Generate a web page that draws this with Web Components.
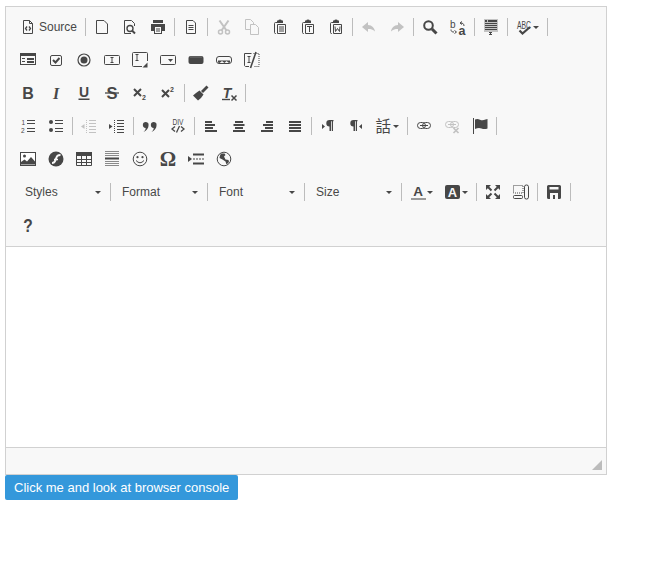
<!DOCTYPE html>
<html lang="en"><head><meta charset="utf-8"><title>Editor</title>
<style>
html,body{margin:0;padding:0;background:#fff}
body{padding:6px 0 0 5px;font-family:"Liberation Sans",Arial,sans-serif;color:#484848}
</style></head><body>
<ck-editor>
  <ck-row>
    <ck-btn icon="source">Source</ck-btn><ck-sep></ck-sep>
    <ck-btn icon="newpage"></ck-btn><ck-btn icon="preview"></ck-btn><ck-btn icon="print"></ck-btn><ck-sep></ck-sep>
    <ck-btn icon="templates"></ck-btn><ck-sep></ck-sep>
    <ck-btn icon="cut" disabled></ck-btn><ck-btn icon="copy" disabled></ck-btn><ck-btn icon="paste"></ck-btn><ck-btn icon="pastetext"></ck-btn><ck-btn icon="pasteword"></ck-btn><ck-sep></ck-sep>
    <ck-btn icon="undo" disabled></ck-btn><ck-btn icon="redo" disabled></ck-btn><ck-sep></ck-sep>
    <ck-btn icon="find"></ck-btn><ck-btn icon="replace"></ck-btn><ck-sep></ck-sep>
    <ck-btn icon="selectall"></ck-btn><ck-sep></ck-sep>
    <ck-btn icon="spell" arrow></ck-btn><ck-sep></ck-sep>
  </ck-row>
  <ck-row>
    <ck-btn icon="form"></ck-btn><ck-btn icon="checkbox"></ck-btn><ck-btn icon="radio"></ck-btn><ck-btn icon="textfield"></ck-btn><ck-btn icon="textarea"></ck-btn><ck-btn icon="select"></ck-btn><ck-btn icon="button"></ck-btn><ck-btn icon="imagebutton"></ck-btn><ck-btn icon="hidden"></ck-btn>
  </ck-row>
  <ck-row>
    <ck-btn icon="bold"></ck-btn><ck-btn icon="italic"></ck-btn><ck-btn icon="underline"></ck-btn><ck-btn icon="strike"></ck-btn><ck-btn icon="sub"></ck-btn><ck-btn icon="sup"></ck-btn><ck-sep></ck-sep>
    <ck-btn icon="brush"></ck-btn><ck-btn icon="removeformat"></ck-btn><ck-sep></ck-sep>
  </ck-row>
  <ck-row>
    <ck-btn icon="ol"></ck-btn><ck-btn icon="ul"></ck-btn><ck-sep></ck-sep>
    <ck-btn icon="outdent" disabled></ck-btn><ck-btn icon="indent"></ck-btn><ck-sep></ck-sep>
    <ck-btn icon="quote"></ck-btn><ck-btn icon="div"></ck-btn><ck-sep></ck-sep>
    <ck-btn icon="left"></ck-btn><ck-btn icon="center"></ck-btn><ck-btn icon="right"></ck-btn><ck-btn icon="justify"></ck-btn><ck-sep></ck-sep>
    <ck-btn icon="ltr"></ck-btn><ck-btn icon="rtl"></ck-btn><ck-btn icon="lang" arrow></ck-btn><ck-sep></ck-sep>
    <ck-btn icon="link"></ck-btn><ck-btn icon="unlink" disabled></ck-btn><ck-btn icon="flag"></ck-btn><ck-sep></ck-sep>
  </ck-row>
  <ck-row>
    <ck-btn icon="image"></ck-btn><ck-btn icon="flash"></ck-btn><ck-btn icon="table"></ck-btn><ck-btn icon="hr"></ck-btn><ck-btn icon="smiley"></ck-btn><ck-btn icon="omega"></ck-btn><ck-btn icon="pagebreak"></ck-btn><ck-btn icon="iframe"></ck-btn>
  </ck-row>
  <ck-row>
    <ck-combo first>Styles</ck-combo><ck-sep></ck-sep>
    <ck-combo>Format</ck-combo><ck-sep></ck-sep>
    <ck-combo>Font</ck-combo><ck-sep></ck-sep>
    <ck-combo>Size</ck-combo><ck-sep></ck-sep>
    <ck-btn icon="textcolor" arrow></ck-btn><ck-btn icon="bgcolor" arrow></ck-btn><ck-sep></ck-sep>
    <ck-btn icon="maximize"></ck-btn><ck-btn icon="showblocks"></ck-btn><ck-sep></ck-sep>
    <ck-btn icon="save"></ck-btn><ck-sep></ck-sep>
  </ck-row>
  <ck-row>
    <ck-btn icon="about"></ck-btn>
  </ck-row>
</ck-editor>
<ck-action>Click me and look at browser console</ck-action>
<script>
const F='font-family="Liberation Sans,Arial,sans-serif"';
const D='fill="currentColor" stroke="none"';
const clip=`<path d="M5 3.500H3.500q-1 0-1 1v9q0 1 1 1H4"/><path ${D} d="M5 1.500h1.200Q6.500 .5 8 .5t1.800 1H11V4H5z"/><path d="M5.500 5.500h8v9h-8z"/>`;
const ICONS={
source:`<path d="M3.500 1.500h6l3 3v10h-9z"/><path d="M9.500 1.500v3h3"/><path stroke-width="1.300" d="M7 7.500 5.500 9.500 7 11.500M9 7.500l1.500 2-1.500 2"/>`,
newpage:`<path d="M2.500 1.500h7.500l3.500 3.500v9.500h-11z"/>`,
preview:`<path d="M9 14.500H2.500v-13h7l3 3V7"/><circle cx="8" cy="9.500" r="3" stroke-width="1.400"/><path stroke-width="2" d="m10 11.500 3 3"/>`,
print:`<path ${D} d="M3 1h10v3H3zM1 5h14v7h-3v3H4v-3H1z"/><path fill="#f8f8f8" stroke="none" d="M5 8h6v6H5z"/><path stroke-width="1" d="M6 10h4M6 12h4"/><path fill="none" d="M4.500 7.500h7v7h-7z"/>`,
templates:`<path d="M3.500 1.500h6.500l2.500 2.500v10.500h-9z"/><path d="M5.500 6.500h5M5.500 8.500h5M5.500 10.500h5"/>`,
cut:`<circle cx="4.500" cy="13" r="2" stroke-width="1.500"/><circle cx="11.500" cy="13" r="2" stroke-width="1.500"/><path stroke-width="2" d="M3.500 1.500 10.500 11.500M12.500 1.500 5.500 11.500"/>`,
copy:`<path d="M1.500 .5h5l3 3v7h-8z"/><path fill="#f8f8f8" d="M6.500 5.500h5l3 3v7h-8z"/>`,
paste:clip+`<path d="M7 8h5M7 10h5M7 12h5"/>`,
pastetext:clip+`<path d="M7 7.500h5M9.500 7.500v5.500"/>`,
pasteword:clip+`<path d="M7 7.500 7.500 12.500 9.500 9.500 11.500 12.500 12 7.500"/>`,
undo:`<path ${D} d="M7 3 1 8l6 5v-3c3 0 5 .5 7 2.500-.5-3.500-3-6.500-7-6.500z"/>`,
redo:`<path ${D} d="M9 3l6 5-6 5v-3c-3 0-5 .5-7 2.500.5-3.500 3-6.500 7-6.500z"/>`,
find:`<circle cx="6.500" cy="6.500" r="4.300" stroke-width="2"/><path stroke-width="3" d="m10 10 4.500 4.500"/>`,
replace:`<text x="0" y="8.500" font-size="10" ${F} ${D}>b</text><text x="8.500" y="15.500" font-size="12.500" font-weight="700" ${F} ${D}>a</text><path d="M14 7c0-2-1-3-3.500-3M12 2.500 10 4l2 1.500M1 10.500c0 2 1 2.500 3 2.500M4.500 11.500l2 1.500-2 1.500"/>`,
selectall:`<path fill="#c4c4c4" stroke="none" d="M1 0h14v13H1z"/><path ${D} d="M2 1h2v2H2zM5 1h9v2H5zM2 4h12v1H2zM2 6h12v1H2zM2 8h12v1H2zM2 10h12v1H2z"/><path stroke-width="1" d="M6 13.500h3M7.500 13.500v2M6 15.500h3"/>`,
spell:`<text x="1" y="10" font-size="11.500" textLength="14" lengthAdjust="spacingAndGlyphs" ${F} ${D}>ABC</text><path stroke-width="2.200" d="m3.500 11.500 3 3 7.500-6.500"/>`,
form:`<path ${D} d="M0 1h16v12H0z"/><path fill="#f8f8f8" stroke="none" d="M1 4h14v8H1z"/><path ${D} d="M2 6h3v1H2zM2 9h3v1H2zM7 6h7v2H7zM7 9h7v2H7z"/>`,
checkbox:`<rect x="2.500" y="3.500" width="11" height="10" rx="1.500"/><path stroke-width="2" d="m5 8 2.500 2.500L11.500 6"/>`,
radio:`<circle cx="8" cy="8" r="6" stroke-width="1.200"/><circle cx="8" cy="8" r="3.500" ${D}/>`,
textfield:`<rect x=".5" y="3.500" width="15" height="9" rx="1"/><path d="M6.500 5.500h3M8 5.500v5M6.500 10.500h3"/>`,
textarea:`<path d="M10 14.500H1.500q-1 0-1-1v-12q0-1 1-1h13q1 0 1 1V9"/><path d="M3.500 2.500h3M5 2.500v6M3.500 8.500h3"/><path ${D} d="M15.500 10.500v5h-5z"/>`,
select:`<rect x=".5" y="3.500" width="15" height="9" rx="1"/><path ${D} d="M8 7h5l-2.500 3z"/>`,
button:`<rect x=".5" y="4" width="15" height="8" rx="2" ${D}/><path stroke="#777" d="M2 5h12"/>`,
imagebutton:`<rect x=".5" y="4.500" width="15" height="7" rx="2.500" stroke-width="1"/><path ${D} d="M2 10.500V8.500h12v2l-1 .5-2.500-2L8.500 11 6 9l-2.500 2z"/>`,
hidden:`<path d="M5 14.500H1.500q-1-.5-1-1V1.500h7"/><path stroke-dasharray="1 1" d="M9.500 1.500h5.500v13h-5"/><path d="M3.500 4.500h3M5 4.500v6M3.500 10.500h3"/><path stroke-width="1.600" d="M6.500 16 12 0"/>`,
bold:`<text x="8" y="14" text-anchor="middle" font-size="16" font-weight="700" ${F} ${D}>B</text>`,
italic:`<text x="8" y="13.500" text-anchor="middle" font-size="16" font-style="italic" font-weight="700" font-family="Liberation Serif,serif" fill="currentColor" stroke="none">I</text>`,
underline:`<text x="8" y="11.500" text-anchor="middle" font-size="14" font-weight="700" ${F} ${D}>U</text><path stroke-width="1.500" d="M2.500 14.250h11"/>`,
strike:`<text x="8" y="14" text-anchor="middle" font-size="16.500" font-weight="700" ${F} ${D}>S</text><path stroke-width="1.300" d="M1 8h14"/>`,
sub:`<path stroke-width="2" d="m2 4 7 7M9 4l-7 7"/><text x="10" y="14.500" font-size="7" font-weight="700" ${F} ${D}>2</text>`,
sup:`<path stroke-width="2" d="m2 5 7 7M9 5l-7 7"/><text x="10" y="6.500" font-size="7" font-weight="700" ${F} ${D}>2</text>`,
brush:`<path ${D} d="M13.500 .5l2 2-5.500 5.500-2-2z"/><path ${D} d="M6.500 5.500 10.500 9.500 8 13 5 15.500 0 10.500 3 8z"/>`,
removeformat:`<text x="6" y="12.500" text-anchor="middle" font-size="14" font-style="italic" font-weight="700" ${F} ${D}>T</text><path stroke-width="1.400" d="M1 14.500h8"/><path stroke-width="1.500" d="m10.500 10.500 5 5M15.500 10.500l-5 5"/>`,
ol:`<text x="1.500" y="7" font-size="6.500" ${F} ${D}>1</text><text x="1" y="15" font-size="6.500" ${F} ${D}>2</text><path stroke-width="1.100" d="M7 2.500h8M7 5.500h8M7 10.500h8M7 13.500h8"/>`,
ul:`<circle cx="3" cy="4" r="2" ${D}/><circle cx="3" cy="12" r="2" ${D}/><path stroke-width="1.100" d="M7 2.500h8M7 5.500h8M7 10.500h8M7 13.500h8"/>`,
outdent:`<path d="M8 2.500h7M8 5.500h7M8 8.500h7M8 11.500h7M8 14.500h7"/><path stroke-dasharray="1 1" d="M5.500 2v13"/><path ${D} d="M0 8.500 3.500 6v5z"/>`,
indent:`<path d="M8 2.500h7M8 5.500h7M8 8.500h7M8 11.500h7M8 14.500h7"/><path stroke-dasharray="1 1" d="M5.500 2v13"/><path ${D} d="M3.500 8.500 0 6v5z"/>`,
quote:`<path ${D} d="M4 4a3 3 0 0 1 2.500 3.500C6.500 10.500 4 13 1.500 14c1.500-1.300 2.200-2.700 2.200-4A3 3 0 0 1 4 4zM12 4a3 3 0 0 1 2.500 3.500C14.500 10.500 12 13 9.500 14c1.500-1.300 2.200-2.700 2.200-4A3 3 0 0 1 12 4z"/>`,
div:`<text x="8" y="6.500" text-anchor="middle" font-size="8.500" textLength="11" lengthAdjust="spacingAndGlyphs" ${F} ${D}>DIV</text><path stroke-width="1.300" d="M5 8.500 2 11l3 2.500M11 8.500l3 2.500-3 2.500M9.500 8l-3 6.500"/>`,
left:`<path stroke-width="2" d="M2 4h7M2 7h10M2 10h8M2 13h12"/>`,
center:`<path stroke-width="2" d="M4 4h8M2.500 7h11M4 10h8M2 13h12"/>`,
right:`<path stroke-width="2" d="M7 4h7M4 7h10M6 10h8M2 13h12"/>`,
justify:`<path stroke-width="2" d="M2 4h12M2 7h12M2 10h12M2 13h12"/>`,
ltr:`<path ${D} d="M2 6 5 8.500 2 11zM13.500 2H9.500a3.200 3.200 0 0 0 0 6.400V13H11V3.200h.8V13h1.200V3.200h.5z"/>`,
rtl:`<path ${D} d="M14 6 11 8.500 14 11zM9.500 2H5.500a3.200 3.200 0 0 0 0 6.400V13H7V3.200h.8V13H9V3.200h.5z"/>`,
lang:`<text x="-.5" y="14" font-size="15.500" font-family="Noto Sans CJK TC,sans-serif" fill="currentColor" stroke="none">話</text>`,
link:`<rect x="1.500" y="4.500" width="8" height="6" rx="3"/><rect x="6.500" y="4.500" width="8" height="6" rx="3"/><path d="M4 7.500h8"/>`,
unlink:`<rect x="1.500" y="3.500" width="8" height="6" rx="3"/><rect x="6.500" y="3.500" width="8" height="6" rx="3"/><path d="M4 6.500h8"/><path stroke-width="1.700" d="m9.500 10 5 5M14.500 10l-5 5"/>`,
flag:`<path stroke-width="1" d="M1.500 0v16"/><path ${D} d="M3 1.500q2.500-1 5 .2t5.500-.2l2-.5v9.500q-3 1-6 0t-6.500.5z"/>`,
image:`<rect x=".5" y="1.500" width="15" height="13" fill="#fff"/><circle cx="4.500" cy="5" r="1.500" ${D}/><path ${D} d="M1 13.500V11l3.500-2.500 2.500 2L11 6l4 4.500v3z"/>`,
flash:`<circle cx="8" cy="8" r="7.500" ${D}/><path stroke="#f8f8f8" stroke-width="2" d="M4 12c3 0 3-2 4-4.500S9.500 4 12.500 4"/><path stroke="#f8f8f8" stroke-width="1.500" d="M6 8.500h4"/>`,
table:`<path ${D} d="M0 1h16v3.500H0z"/><path d="M.5 1.500h15v13H.5zM.5 8.500h15M.5 11.500h15M5.500 4v11M10.500 4v11M.5 4.500h15"/>`,
hr:`<path stroke="#8a8a8a" d="M1 .5h14M1 2.500h14M1 4.500h14M1 10.500h14M1 12.500h14M1 14.500h14"/><path stroke-width="2" d="M1 7.500h14"/>`,
smiley:`<circle cx="8" cy="8" r="6.800"/><circle cx="5.500" cy="6.200" r="1.100" ${D}/><circle cx="10.500" cy="6.200" r="1.100" ${D}/><path d="M4 9.500q4 4.500 8 0"/>`,
omega:`<text x="8" y="15" text-anchor="middle" font-size="20.500" font-weight="700" font-family="Liberation Serif,serif" fill="currentColor" stroke="none">Ω</text>`,
pagebreak:`<path ${D} d="M0 5 4 8 0 11z"/><path stroke-width="2" d="M5 3.500h11M5 12.500h11"/><path stroke-dasharray="2 1" d="M5 8h11"/>`,
iframe:`<circle cx="8" cy="8" r="6.800"/><path ${D} d="M5 2.500 8.500 2.500 9.500 4 8 5.500 9.500 8.500 12.500 9 13 11 10.500 13.500 9.500 10.500 6.500 8.500 3.500 7 4 4.500z"/>`,
textcolor:`<text x="8" y="11.500" text-anchor="middle" font-size="13.500" font-weight="700" ${F} ${D}>A</text><path stroke="#9a9a9a" stroke-width="2" d="M1 15h15"/>`,
bgcolor:`<rect x="0" y="1" width="15" height="14" rx="2" ${D}/><text x="7.500" y="13" text-anchor="middle" font-size="13" font-weight="700" ${F} fill="#f8f8f8" stroke="none">A</text>`,
maximize:`<path ${D} d="M1 1h5L1 6zM15 1v5l-5-5zM1 15v-5l5 5zM15 15h-5l5-5z"/><path stroke-width="2" d="M3 3l3.500 3.500M13 3 9.500 6.500M3 13l3.500-3.500M13 13 9.500 9.500"/>`,
showblocks:`<path stroke-dasharray="1 1" d="M.5 1.500h9.500v7.500h-9.500z"/><rect x=".5" y="11.500" width="9" height="3" rx="1"/><rect x="11.500" y="1" width="4" height="14" rx="1.800" stroke-width="1"/>`,
save:`<path ${D} d="M2.500 1h11A1.500 1.500 0 0 1 15 2.500v11a1.500 1.500 0 0 1-1.500 1.500h-11A1.500 1.500 0 0 1 1 13.500v-11A1.500 1.500 0 0 1 2.500 1z"/><path fill="#f8f8f8" stroke="none" d="M3.500 3h9v2.500h-9zM4 9h8v6H4z"/><path ${D} d="M7 11h2v4H7z"/>`,
about:`<text x="8" y="14.500" text-anchor="middle" font-size="18" font-weight="700" textLength="9.500" lengthAdjust="spacingAndGlyphs" ${F} ${D}>?</text>`
};
function el(html){const t=document.createElement('template');t.innerHTML=html;return t.content}
class Base extends HTMLElement{
  render(html){this.attachShadow({mode:'open'}).append(el(html))}
}
customElements.define('ck-editor',class extends Base{connectedCallback(){if(this.shadowRoot)return;this.render(`<style>
:host{display:flex;flex-direction:column;box-sizing:border-box;width:602px;height:469px;border:1px solid #d1d1d1;background:#fff}
.top{background:#f8f8f8;border-bottom:1px solid #d1d1d1;padding:6px 8px 2px;display:flex;flex-direction:column;flex:none;height:240px;box-sizing:border-box}
.body{flex:1;background:#fff}
.bottom{flex:none;height:27px;box-sizing:border-box;background:#f8f8f8;border-top:1px solid #d1d1d1;display:flex;justify-content:flex-end;align-items:flex-end;padding:0 4px 4px 0}
svg{display:block}
</style><div class="top"><slot></slot></div><div class="body"></div><div class="bottom"><svg width="10" height="10" viewBox="0 0 10 10"><path fill="#bcbcbc" d="M10 0v10H0z"/></svg></div>`)}});
customElements.define('ck-row',class extends Base{connectedCallback(){if(this.shadowRoot)return;this.render(`<style>
:host{display:flex;align-items:center;height:28px;margin-bottom:5px;flex:none}
</style><slot></slot>`)}});
customElements.define('ck-sep',class extends Base{connectedCallback(){if(this.shadowRoot)return;this.render(`<style>
:host{display:block;flex:none;width:1px;height:18px;margin:0 2px;background:#bcbcbc}
</style>`)}});
customElements.define('ck-btn',class extends Base{connectedCallback(){if(this.shadowRoot)return;
const name=this.getAttribute('icon');const dis=this.hasAttribute('disabled');const arrow=this.hasAttribute('arrow');const lab=this.textContent.trim()!=='';
this.render(`<style>
:host{display:flex;align-items:center;flex:none;height:28px;box-sizing:border-box;padding:0 6px;color:#474747;font:12px/16px "Liberation Sans",Arial,sans-serif}
svg{display:block;width:16px;height:16px;flex:none;overflow:visible}
.i{opacity:${dis?'.3':'1'}}
.l{color:#484848;margin-left:3px;${lab?'':'display:none'}}
.a{width:0;height:0;border:solid transparent;border-width:3px 3px 0;border-top-color:#474747;margin-left:1px;flex:none}
</style><svg class="i" viewBox="0 0 16 16" fill="none" stroke="currentColor" stroke-width="1" aria-hidden="true">${ICONS[name]||''}</svg><span class="l"><slot></slot></span>${arrow?'<span class="a"></span>':''}`)}});
customElements.define('ck-combo',class extends Base{connectedCallback(){if(this.shadowRoot)return;this.render(`<style>
:host{display:flex;align-items:center;flex:none;box-sizing:border-box;width:92px;height:28px;padding:0 7px 0 9px;font:12px/16px "Liberation Sans",Arial,sans-serif;color:#484848}
:host([first]){margin-left:2px}
.t{flex:1}
.a{width:0;height:0;border:solid transparent;border-width:3px 3px 0;border-top-color:#474747;margin-top:1px}
</style><span class="t"><slot></slot></span><span class="a"></span>`)}});
customElements.define('ck-action',class extends Base{connectedCallback(){if(this.shadowRoot)return;this.render(`<style>
:host{display:block;width:233px;box-sizing:border-box;height:25px;padding:0 9px;background:#3498db;color:#fff;border-radius:2px;font:13px/25px "Liberation Sans",Arial,sans-serif;white-space:nowrap;cursor:pointer}
</style><slot></slot>`)}});
</script>
</body></html>
